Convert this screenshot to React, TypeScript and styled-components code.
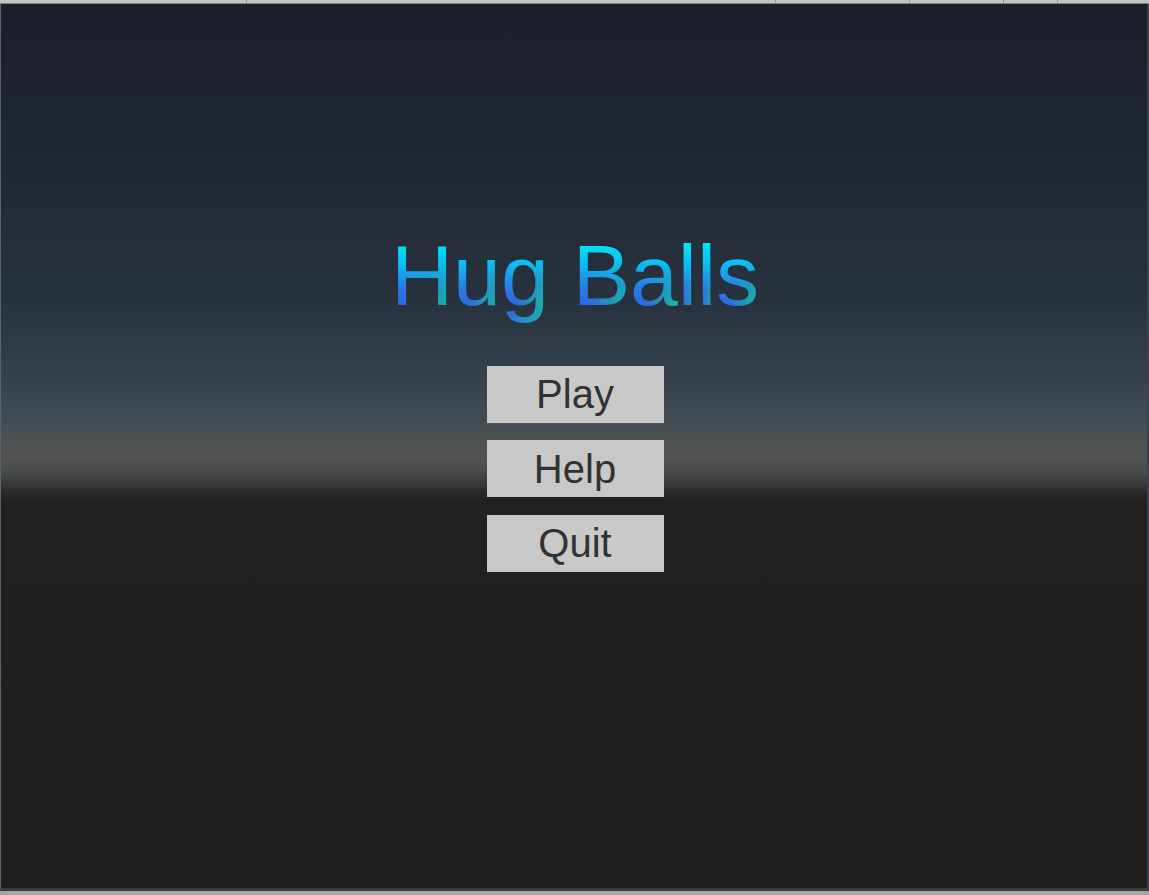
import React from "react";
import styled, { createGlobalStyle } from "styled-components";

const GlobalStyle = createGlobalStyle`
  html, body {
    margin: 0;
    padding: 0;
    background: #a6a6a6;
    overflow: hidden;
  }
  #root {
    width: 1149px;
    height: 895px;
  }
`;

const Window = styled.div`
  width: 1149px;
  height: 895px;
  display: flex;
  flex-direction: column;
  background: #a6a6a6;
`;

const TabStrip = styled.div`
  height: 3px;
  display: flex;
  background: #c4c4c4;
  border-bottom: 1px solid #7d7f83;
  flex: none;
`;

const TabSegment = styled.div<{ $w: number }>`
  width: ${(p) => p.$w}px;
  flex: none;
  border-right: 1px solid #8f8f8f;
  box-sizing: border-box;
`;

const Viewport = styled.main`
  flex: 1;
  display: flex;
  flex-direction: column;
  align-items: center;
  padding-top: 218px;
  padding-left: 2px;
  box-sizing: border-box;
  border-left: 1px solid #59636e;
  border-right: 2px solid #3c4048;
  border-bottom: 3px solid #3b3b3b;
  margin-bottom: 4px;
  background: linear-gradient(
    to bottom,
    #1b1f2a 0px,
    #1f2632 150px,
    #28323f 296px,
    #34404c 370px,
    #414b54 410px,
    #4b5251 436px,
    #525252 452px,
    #4a4d4c 466px,
    #3a3c3b 478px,
    #2a2a29 487px,
    #22211f 496px,
    #201f1d 100%
  );
  font-family: "Liberation Sans", Arial, sans-serif;
`;

const Title = styled.h1`
  margin: 0 0 36px;
  font-size: 86px;
  font-weight: 400;
  line-height: 1.25;
  white-space: pre;
  display: flex;
`;

const Letter = styled.span`
  display: inline-block;
  color: transparent;
  background:
    radial-gradient(
      ellipse 70% 45% at 100% 80%,
      rgba(22, 196, 150, 0.95) 0%,
      rgba(22, 196, 150, 0) 100%
    ),
    linear-gradient(
      to bottom,
      #00e6f2 20%,
      #10b4f0 42%,
      #2a78e4 62%,
      #2f64dc 80%,
      #20a0c8 100%
    );
  -webkit-background-clip: text;
  background-clip: text;
`;

const Menu = styled.nav`
  display: flex;
  flex-direction: column;
  gap: 17.5px;
`;

const MenuButton = styled.button`
  width: 177px;
  height: 57px;
  border: none;
  padding: 0;
  background: #c9c9c9;
  color: #323232;
  font-family: "Liberation Sans", Arial, sans-serif;
  font-size: 40px;
  line-height: 1;
  display: flex;
  align-items: center;
  justify-content: center;
  cursor: pointer;
`;

const tabs = [247, 529, 134, 94, 54];

export default function App() {
  const title = "Hug Balls";
  return (
    <>
      <GlobalStyle />
      <Window>
        <TabStrip>
          {tabs.map((w, i) => (
            <TabSegment key={i} $w={w} />
          ))}
        </TabStrip>
        <Viewport>
          <Title>
            {title.split("").map((ch, i) => (
              <Letter key={i}>{ch}</Letter>
            ))}
          </Title>
          <Menu>
            <MenuButton>Play</MenuButton>
            <MenuButton>Help</MenuButton>
            <MenuButton>Quit</MenuButton>
          </Menu>
        </Viewport>
      </Window>
    </>
  );
}
